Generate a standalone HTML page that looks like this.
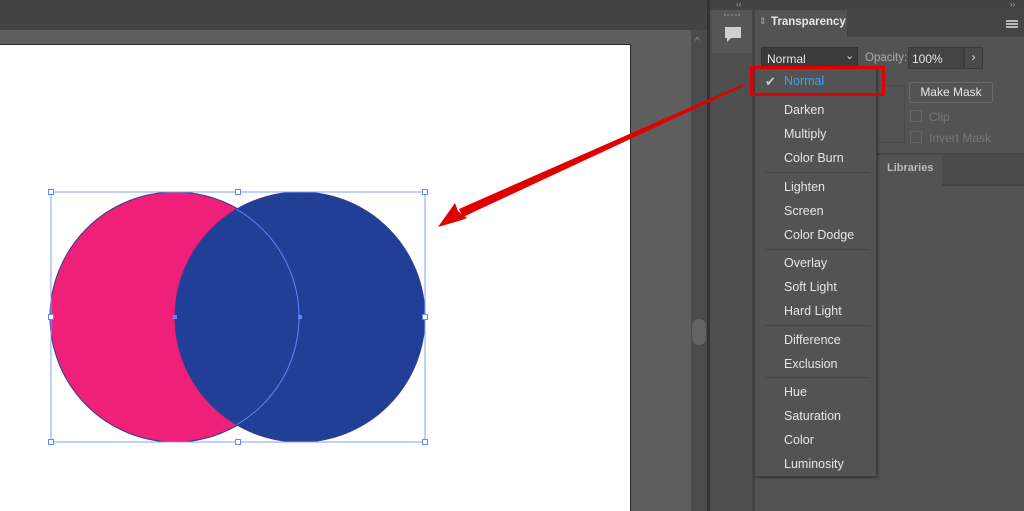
<!DOCTYPE html>
<html><head><meta charset="utf-8"><style>
*{margin:0;padding:0;box-sizing:border-box}
body{width:1024px;height:511px;overflow:hidden;background:#535353;position:relative;font-family:"Liberation Sans",sans-serif;font-size:12px;color:#ddd}
.a{position:absolute}
.mi{position:absolute;left:784px;font-size:12.5px;color:#e6e6e6}
.sep{position:absolute;left:764px;width:106px;height:1px;background:#474747}
</style></head><body>
<div class="a" style="left:0;top:0;width:707px;height:30px;background:#434343"></div>
<div class="a" style="left:0;top:30px;width:691px;height:481px;background:#5e5e5e"></div>
<div class="a" style="left:0;top:44px;width:631px;height:467px;background:#fff;border-top:1px solid #2a2a2a;border-right:1px solid #2a2a2a"></div>
<div class="a" style="left:691px;top:30px;width:16px;height:481px;background:#4b4b4b"></div>
<div class="a" style="left:695px;top:36px;color:#999;font-size:10px">^</div>
<div class="a" style="left:692px;top:319px;width:14px;height:26px;background:#636363;border-radius:7px"></div>
<div class="a" style="left:707px;top:0;width:3px;height:511px;background:#333"></div>
<div class="a" style="left:710px;top:0;width:314px;height:10px;background:#434343"></div>
<div class="a" style="left:736px;top:0;color:#aaa;font-size:8px">‹‹</div>
<div class="a" style="left:1010px;top:0;color:#aaa;font-size:8px">››</div>
<div class="a" style="left:710px;top:10px;width:42px;height:501px;background:#4f4f4f"></div>
<div class="a" style="left:712px;top:10px;width:40px;height:43px;background:#565656"></div>
<div class="a" style="left:724px;top:14px;width:16px;height:2px;border-top:2px dotted #777"></div>
<svg class="a" style="left:723px;top:26px" width="20" height="18"><path d="M2 1h16v11H8l-4 4v-4H2z" fill="#d0d0d0"/></svg>
<div class="a" style="left:752px;top:10px;width:3px;height:501px;background:#444"></div>
<div class="a" style="left:755px;top:10px;width:269px;height:27px;background:#444"></div>
<div class="a" style="left:755px;top:10px;width:92px;height:28px;background:#535353"></div>
<div class="a" style="left:759px;top:16px;color:#aaa;font-size:9px">⇕</div>
<div class="a" style="left:771px;top:16px;font-weight:bold;font-size:11.5px;color:#e8e8e8">Transparency</div>
<div class="a" style="left:1006px;top:20px;width:12px;height:8px;border-top:2px solid #bbb;border-bottom:2px solid #bbb"></div>
<div class="a" style="left:1006px;top:23px;width:12px;height:2px;background:#bbb"></div>
<div class="a" style="left:761px;top:47px;width:97px;height:22px;background:#3b3b3b;border:1px solid #333"></div>
<div class="a" style="left:767px;top:52px;color:#e6e6e6">Normal</div>
<div class="a" style="left:845px;top:49px;color:#ddd;font-size:11px">⌄</div>
<div class="a" style="left:865px;top:52px;color:#aaa;font-size:11.5px">Opacity:</div>
<div class="a" style="left:908px;top:47px;width:56px;height:22px;background:#444;border:1px solid #3a3a3a"></div>
<div class="a" style="left:912px;top:52px;color:#e6e6e6">100%</div>
<div class="a" style="left:964px;top:47px;width:19px;height:22px;background:#4a4a4a;border:1px solid #3a3a3a;color:#ddd;text-align:center;line-height:19px">›</div>
<div class="a" style="left:876px;top:85px;width:29px;height:58px;border:1px solid #4a4a4a"></div>
<div class="a" style="left:909px;top:82px;width:84px;height:21px;border:1px solid #6a6a6a;border-radius:2px;text-align:center;line-height:19px;color:#e6e6e6">Make Mask</div>
<div class="a" style="left:910px;top:110px;width:12px;height:12px;border:1px solid #666"></div>
<div class="a" style="left:929px;top:110px;color:#777">Clip</div>
<div class="a" style="left:910px;top:131px;width:12px;height:12px;border:1px solid #666"></div>
<div class="a" style="left:929px;top:131px;color:#777">Invert Mask</div>
<div class="a" style="left:755px;top:153px;width:269px;height:2px;background:#444"></div>
<div class="a" style="left:755px;top:155px;width:269px;height:31px;background:#4a4a4a;border-bottom:2px solid #444"></div>
<div class="a" style="left:876px;top:155px;width:66px;height:31px;background:#535353"></div>
<div class="a" style="left:887px;top:162px;color:#bbb;font-weight:bold;font-size:11px">Libraries</div>
<div class="a" style="left:754px;top:67px;width:123px;height:410px;background:#535353;border:1px solid #3c3c3c;box-shadow:1px 1px 2px rgba(0,0,0,.4)"></div>
<div class="a" style="left:765px;top:74px;color:#ccc;font-size:13px">✔</div>
<div class="mi" style="top:74px;color:#3d9dff">Normal</div>
<div class="mi" style="top:103px">Darken</div>
<div class="mi" style="top:127px">Multiply</div>
<div class="mi" style="top:151px">Color Burn</div>
<div class="sep" style="top:172px"></div>
<div class="mi" style="top:180px">Lighten</div>
<div class="mi" style="top:204px">Screen</div>
<div class="mi" style="top:228px">Color Dodge</div>
<div class="sep" style="top:249px"></div>
<div class="mi" style="top:256px">Overlay</div>
<div class="mi" style="top:280px">Soft Light</div>
<div class="mi" style="top:304px">Hard Light</div>
<div class="sep" style="top:325px"></div>
<div class="mi" style="top:333px">Difference</div>
<div class="mi" style="top:357px">Exclusion</div>
<div class="sep" style="top:377px"></div>
<div class="mi" style="top:385px">Hue</div>
<div class="mi" style="top:409px">Saturation</div>
<div class="mi" style="top:433px">Color</div>
<div class="mi" style="top:457px">Luminosity</div>
<div class="a" style="left:750px;top:66px;width:135px;height:30px;border:3px solid #e00000"></div>
<svg class="a" style="left:0;top:0" width="1024" height="511">
<defs><clipPath id="c"><circle cx="300" cy="317" r="125"/></clipPath></defs>
<circle cx="175" cy="317" r="125" fill="#ee2079" stroke="#2f3f8f" stroke-width="1"/>
<circle cx="300" cy="317" r="125" fill="#213f97" stroke="#2f3f8f" stroke-width="1"/>
<circle cx="175" cy="317" r="124" fill="none" stroke="#5b87ff" stroke-width="1" clip-path="url(#c)"/>
<rect x="51" y="192" width="374" height="250" fill="none" stroke="#7fa0ff" stroke-width="1"/>
<g fill="#fff" stroke="#5b87ff" stroke-width="1">
<rect x="48.5" y="189.5" width="5" height="5"/><rect x="235.5" y="189.5" width="5" height="5"/><rect x="422.5" y="189.5" width="5" height="5"/>
<rect x="48.5" y="314.5" width="5" height="5"/><rect x="422.5" y="314.5" width="5" height="5"/>
<rect x="48.5" y="439.5" width="5" height="5"/><rect x="235.5" y="439.5" width="5" height="5"/><rect x="422.5" y="439.5" width="5" height="5"/>
</g>
<rect x="173" y="315" width="4" height="4" fill="#5b87ff"/><rect x="298" y="315" width="4" height="4" fill="#5b87ff"/>
<path d="M743 84 L744 86 L463 217 L459 209 Z" fill="#e00000"/>
<path d="M438 227 L455 203 L458 211 L467 218 L462 220 Z" fill="#e00000"/>
</svg>
</body></html>
